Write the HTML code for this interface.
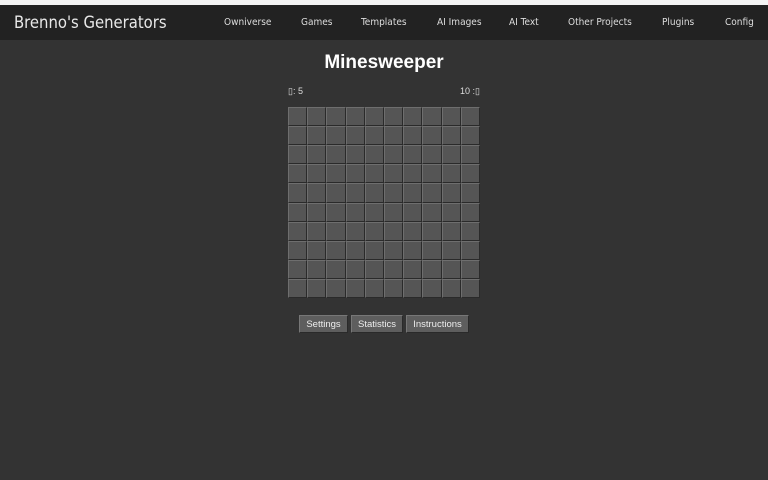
<!DOCTYPE html>
<html><head><style>
body{margin:0;width:768px;height:480px;background:#333;font-family:"Liberation Sans",sans-serif;overflow:hidden;position:relative}
.top{position:absolute;left:0;top:0;width:768px;height:5px;background:#f4f4f4}
.nav{position:absolute;left:0;top:5px;width:768px;height:35px;background:#222;color:#ddd}
.brand{position:absolute;left:14px;top:8px;font-size:16.5px;color:#e8e8e8;font-family:"DejaVu Sans Condensed","Liberation Sans",sans-serif}
.nav span.l{position:absolute;top:12px;font-size:10px;color:#ddd;font-family:"DejaVu Sans Condensed","Liberation Sans",sans-serif}
h1{position:absolute;left:0;width:768px;top:52px;margin:0;text-align:center;color:#fff;font-size:19px;font-weight:bold}
.cnt{position:absolute;top:86px;font-size:9px;color:#ddd}
.grid{position:absolute;left:288px;top:107px;width:192px;height:191px;display:grid;grid-template-columns:repeat(10,1fr);grid-template-rows:repeat(10,1fr);background:#555}
.grid div{border-top:1px solid #6e6e6e;border-left:1px solid #6e6e6e;border-right:1px solid #2a2a2a;border-bottom:1px solid #2a2a2a;background:#555}
.btn{position:absolute;top:315px;height:18px;background:#5e5e5e;border:1px solid #777;border-right-color:#2a2a2a;border-bottom-color:#2a2a2a;box-sizing:border-box;color:#eee;font-size:9.5px;text-align:center;line-height:17px}
</style></head><body>
<div class="top"></div>
<div class="nav"><div class="brand">Brenno's Generators</div>
<span class="l" style="left:224px">Owniverse</span>
<span class="l" style="left:301px">Games</span>
<span class="l" style="left:361px">Templates</span>
<span class="l" style="left:437px">AI Images</span>
<span class="l" style="left:509px">AI Text</span>
<span class="l" style="left:568px">Other Projects</span>
<span class="l" style="left:662px">Plugins</span>
<span class="l" style="left:725px">Config</span>
</div>
<h1>Minesweeper</h1>
<div class="cnt" style="left:288px">▯: 5</div>
<div class="cnt" style="left:460px">10 :▯</div>
<div class="grid">
<div></div><div></div><div></div><div></div><div></div><div></div><div></div><div></div><div></div><div></div>
<div></div><div></div><div></div><div></div><div></div><div></div><div></div><div></div><div></div><div></div>
<div></div><div></div><div></div><div></div><div></div><div></div><div></div><div></div><div></div><div></div>
<div></div><div></div><div></div><div></div><div></div><div></div><div></div><div></div><div></div><div></div>
<div></div><div></div><div></div><div></div><div></div><div></div><div></div><div></div><div></div><div></div>
<div></div><div></div><div></div><div></div><div></div><div></div><div></div><div></div><div></div><div></div>
<div></div><div></div><div></div><div></div><div></div><div></div><div></div><div></div><div></div><div></div>
<div></div><div></div><div></div><div></div><div></div><div></div><div></div><div></div><div></div><div></div>
<div></div><div></div><div></div><div></div><div></div><div></div><div></div><div></div><div></div><div></div>
<div></div><div></div><div></div><div></div><div></div><div></div><div></div><div></div><div></div><div></div>
</div>
<div class="btn" style="left:299px;width:49px">Settings</div>
<div class="btn" style="left:351px;width:52px">Statistics</div>
<div class="btn" style="left:406px;width:63px">Instructions</div>
</body></html>
